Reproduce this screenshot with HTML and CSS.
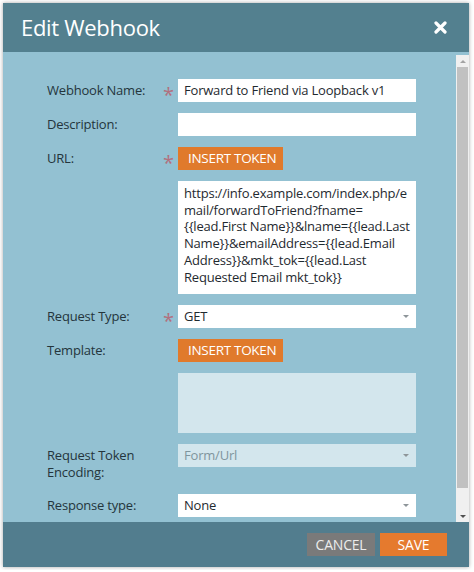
FILE: index.html
```html
<!DOCTYPE html>
<html>
<head>
<meta charset="utf-8">
<link rel="stylesheet" href="styles.css">
</head>
<body>
<div class="dialog">
  <div class="header">
    <div class="title">Edit Webhook</div>
    <svg class="close" width="13" height="13" viewBox="0 0 13 13"><path d="M2 2 L11 11 M11 2 L2 11" stroke="#fff" stroke-width="3.2" stroke-linecap="round"/></svg>
  </div>
  <div class="body">
    <div class="content">
      <div class="form">
        <div class="label">Webhook Name:</div>
        <div class="req">*</div>
        <div class="field input">Forward to Friend via Loopback v1</div>

        <div class="label">Description:</div>
        <div class="req"></div>
        <div class="field input"></div>

        <div class="label">URL:</div>
        <div class="req">*</div>
        <div class="field"><span class="token">INSERT TOKEN</span></div>

        <div class="label"></div>
        <div class="req"></div>
        <div class="field area"><div>https://info.example.com/index.php/e</div><div>mail/forwardToFriend?fname=</div><div>{{lead.First Name}}&amp;lname={{lead.Last</div><div>Name}}&amp;emailAddress={{lead.Email</div><div>Address}}&amp;mkt_tok={{lead.Last</div><div>Requested Email mkt_tok}}</div></div>

        <div class="label">Request Type:</div>
        <div class="req">*</div>
        <div class="field input select"><span>GET</span><span class="caret"></span></div>

        <div class="label">Template:</div>
        <div class="req"></div>
        <div class="field"><span class="token">INSERT TOKEN</span></div>

        <div class="label"></div>
        <div class="req"></div>
        <div class="field area disabled tall"></div>

        <div class="label two">Request Token<br>Encoding:</div>
        <div class="req"></div>
        <div class="field"><div class="input select disabled"><span>Form/Url</span><span class="caret"></span></div></div>

        <div class="label">Response type:</div>
        <div class="req"></div>
        <div class="field input select"><span>None</span><span class="caret"></span></div>
      </div>
    </div>
    <div class="scrollbar">
      <div class="sb-btn"><span class="up"></span></div>
      <div class="sb-thumb"></div>
      <div class="sb-track"></div>
      <div class="sb-btn"><span class="down"></span></div>
    </div>
  </div>
  <div class="footer">
    <span class="btn cancel">CANCEL</span>
    <span class="btn save">SAVE</span>
  </div>
</div>
</body>
</html>
```
FILE: styles.css
```css
html, body {
  margin: 0;
  padding: 0;
  background: #ffffff;
}
body {
  font-family: "Open Sans", "Noto Sans", sans-serif;
  padding: 3px;
}
.dialog {
  width: 466px;
  height: 564px;
  display: flex;
  flex-direction: column;
  box-shadow: 0 0 4px rgba(0, 0, 0, 0.35);
}
.header {
  height: 49px;
  background: #53808f;
  display: flex;
  align-items: center;
  justify-content: space-between;
  padding: 0 22px 0 18px;
}
.title {
  color: #ffffff;
  font-size: 22px;
  line-height: 30px;
  margin-top: -1px;
  letter-spacing: -0.3px;
}
.close {
  display: block;
}
.body {
  height: 470px;
  background: #93c1d2;
  display: flex;
}
.content {
  flex: 1;
  padding: 27px 0 0 44px;
}
.form {
  display: grid;
  grid-template-columns: 116px 15px 238px;
  row-gap: 11px;
  align-items: start;
}
.label {
  color: #24353c;
  font-size: 13px;
  letter-spacing: -0.2px;
  line-height: 17px;
  padding-top: 3px;
}
.label.two {
  padding-bottom: 2px;
}
.req {
  color: #b2707e;
  font-size: 20px;
  line-height: 23px;
  height: 23px;
  padding-top: 4px;
  box-sizing: border-box;
}
.field {
  font-size: 13px;
  letter-spacing: -0.2px;
  color: #1f2a30;
}
.input {
  background: #ffffff;
  height: 23px;
  line-height: 23px;
  padding: 0 6px;
  box-sizing: border-box;
}
.select {
  display: flex;
  justify-content: space-between;
  align-items: center;
}
.caret {
  width: 0;
  height: 0;
  border-left: 3px solid transparent;
  border-right: 3px solid transparent;
  border-top: 3px solid #8e9599;
  margin-right: 1px;
}
.disabled {
  background: #d3e6ed;
  color: #7f959d;
}
.token {
  display: inline-block;
  background: #e07a2c;
  color: #ffffff;
  font-size: 13.5px;
  letter-spacing: -0.3px;
  height: 23px;
  line-height: 23px;
  padding: 0 0 0 10px;
  width: 105px;
  box-sizing: border-box;
  white-space: nowrap;
}
.area {
  background: #ffffff;
  height: 113px;
  padding: 4px 6px 0 6px;
  box-sizing: border-box;
  line-height: 16.7px;
  white-space: nowrap;
}
.area.tall {
  height: 60px;
  background: #d3e6ed;
}
.scrollbar {
  width: 13px;
  margin-top: 3px;
  display: flex;
  flex-direction: column;
  background: #f0f0f0;
}
.sb-btn {
  height: 12px;
  display: flex;
  align-items: center;
  justify-content: center;
}
.up {
  width: 0;
  height: 0;
  border-left: 3px solid transparent;
  border-right: 3px solid transparent;
  border-bottom: 3px solid #a3a3a3;
}
.down {
  width: 0;
  height: 0;
  border-left: 3px solid transparent;
  border-right: 3px solid transparent;
  border-top: 3px solid #505050;
}
.sb-thumb {
  height: 421px;
  background: #c1c1c1;
  margin: 0 1px;
}
.sb-track {
  flex: 1;
}
.footer {
  flex: 1;
  background: #527d8e;
  display: flex;
  justify-content: flex-end;
  align-items: flex-start;
  padding: 11px 22px 0 0;
  gap: 5px;
}
.btn {
  height: 23px;
  line-height: 23px;
  font-size: 14px;
  letter-spacing: -0.2px;
  text-align: center;
  box-sizing: border-box;
}
.cancel {
  width: 68px;
  background: #7a7a7a;
  color: #ececec;
}
.save {
  width: 67px;
  background: #e57a2e;
  color: #ffffff;
}
```
